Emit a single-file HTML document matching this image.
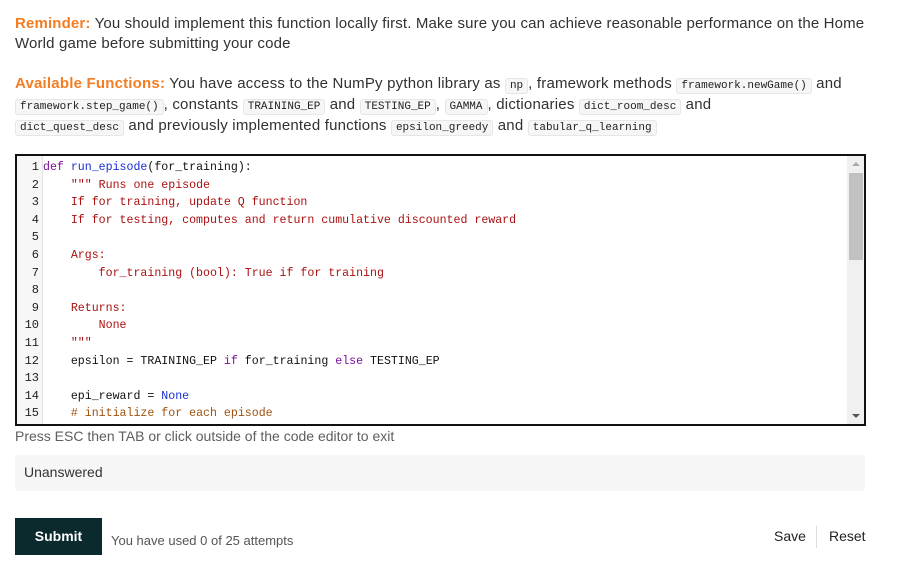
<!DOCTYPE html>
<html><head><meta charset="utf-8"><style>
*{margin:0;padding:0;box-sizing:border-box}
body{width:906px;height:585px;background:#fff;font-family:"Liberation Sans",sans-serif;color:#313131;position:relative;overflow:hidden}
.l{position:absolute;left:15px;font-size:15px;white-space:nowrap;letter-spacing:0.15px}
.o{color:#f37d22;font-weight:bold}
code{font-family:"Liberation Mono",monospace;font-size:11px;background:#f6f6f6;border:1px solid #e6e6e6;border-radius:3px;padding:1px 4px;color:#222;letter-spacing:0}
.ed{position:absolute;left:15px;top:154px;width:851px;height:272px;border:2px solid #111;background:#fff;overflow:hidden}
.gut{position:absolute;left:0;top:0;width:26px;height:100%;background:#f7f7f7;border-right:1px solid #e4e4e4}
.cl{position:absolute;left:0;width:840px;height:17.6px;font-family:"Liberation Mono",monospace;font-size:11.6px;white-space:pre;color:#111}
.cl .n{display:inline-block;width:22px;text-align:right;color:#222;margin-right:4px;font-size:12px}
.k{color:#7a0f9a}.f{color:#1a2fd1}.s{color:#a11}.c{color:#a0520f}
.sb{position:absolute;right:0;top:0;width:17px;height:100%;background:#f0f0f0}
</style></head><body>
<div class="l" style="top:15px"><span class="o">Reminder:</span> You should implement this function locally first. Make sure you can achieve reasonable performance on the Home</div>
<div class="l" style="top:35px">World game before submitting your code</div>
<div class="l" style="top:75px;letter-spacing:0.2px"><span class="o">Available Functions:</span> You have access to the NumPy python library as <code>np</code>, framework methods <code>framework.newGame()</code> and</div>
<div class="l" style="top:96px;letter-spacing:0.2px"><code>framework.step_game()</code>, constants <code>TRAINING_EP</code> and <code>TESTING_EP</code>, <code>GAMMA</code>, dictionaries <code>dict_room_desc</code> and</div>
<div class="l" style="top:117px;letter-spacing:0.2px"><code>dict_quest_desc</code> and previously implemented functions <code>epsilon_greedy</code> and <code>tabular_q_learning</code></div>

<div class="ed">
<div class="gut"></div>
<div class="cl" style="top:4px"><span class="n">1</span><span class="k">def</span> <span class="f">run_episode</span>(for_training):</div>
<div class="cl" style="top:21.6px"><span class="n">2</span>    <span class="s">""" Runs one episode</span></div>
<div class="cl" style="top:39.2px"><span class="n">3</span><span class="s">    If for training, update Q function</span></div>
<div class="cl" style="top:56.8px"><span class="n">4</span><span class="s">    If for testing, computes and return cumulative discounted reward</span></div>
<div class="cl" style="top:74.4px"><span class="n">5</span></div>
<div class="cl" style="top:92px"><span class="n">6</span><span class="s">    Args:</span></div>
<div class="cl" style="top:109.6px"><span class="n">7</span><span class="s">        for_training (bool): True if for training</span></div>
<div class="cl" style="top:127.2px"><span class="n">8</span></div>
<div class="cl" style="top:144.8px"><span class="n">9</span><span class="s">    Returns:</span></div>
<div class="cl" style="top:162.4px"><span class="n">10</span><span class="s">        None</span></div>
<div class="cl" style="top:180px"><span class="n">11</span><span class="s">    """</span></div>
<div class="cl" style="top:197.6px"><span class="n">12</span>    epsilon = TRAINING_EP <span class="k">if</span> for_training <span class="k">else</span> TESTING_EP</div>
<div class="cl" style="top:215.2px"><span class="n">13</span></div>
<div class="cl" style="top:232.8px"><span class="n">14</span>    epi_reward = <span class="f">None</span></div>
<div class="cl" style="top:250.4px"><span class="n">15</span>    <span class="c"># initialize for each episode</span></div>
<div class="sb">
<div style="position:absolute;left:5px;top:6px;width:0;height:0;border-left:4px solid transparent;border-right:4px solid transparent;border-bottom:4px solid #aaa"></div>
<div style="position:absolute;left:2px;top:17px;width:14px;height:87px;background:#c1c1c1"></div>
<div style="position:absolute;left:5px;bottom:6px;width:0;height:0;border-left:4px solid transparent;border-right:4px solid transparent;border-top:4px solid #555"></div>
</div>
</div>

<div class="l" style="top:428px;font-size:14px;color:#5e5e5e;letter-spacing:0">Press ESC then TAB or click outside of the code editor to exit</div>
<div style="position:absolute;left:15px;top:455px;width:850px;height:36px;background:#f6f6f6;border-radius:4px"></div>
<div class="l" style="top:464px;left:24px;font-size:14px;color:#333;letter-spacing:0">Unanswered</div>

<div style="position:absolute;left:15px;top:518px;width:87px;height:37px;background:#0a2a2e;color:#fff;font-weight:bold;font-size:14px;text-align:center;line-height:37px">Submit</div>
<div class="l" style="top:533px;left:111px;font-size:13px;color:#555;letter-spacing:0">You have used 0 of 25 attempts</div>
<div class="l" style="top:528px;left:774px;font-size:14px;color:#222;letter-spacing:0">Save</div>
<div style="position:absolute;left:816px;top:526px;width:1px;height:22px;background:#ddd"></div>
<div class="l" style="top:528px;left:829px;font-size:14px;color:#222;letter-spacing:0">Reset</div>
</body></html>
